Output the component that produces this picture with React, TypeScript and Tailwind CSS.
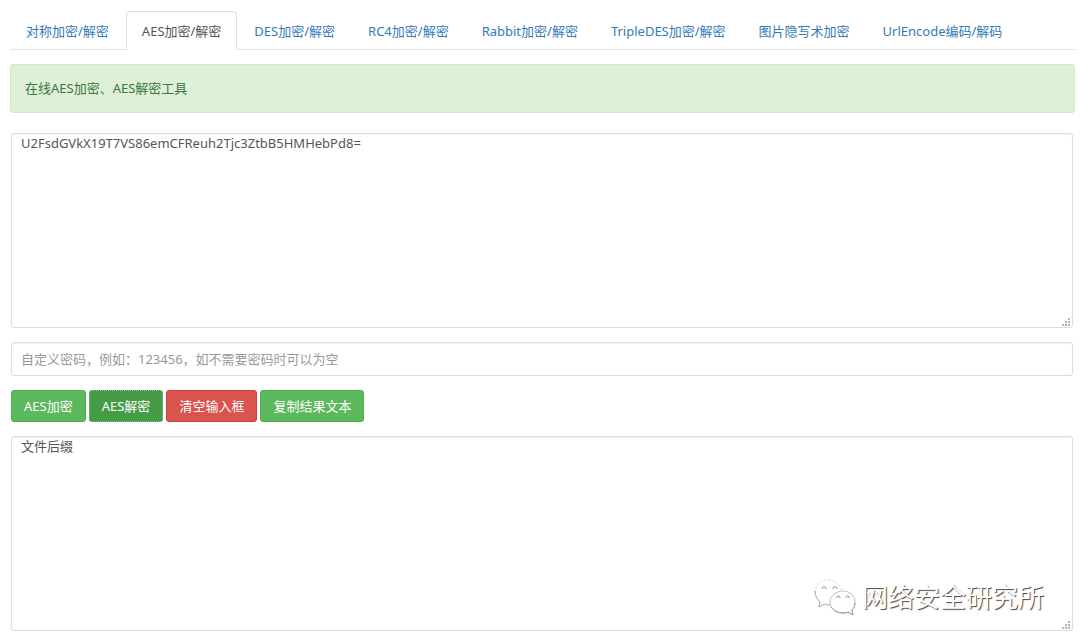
import React from "react";

const tabs = [
  "对称加密/解密",
  "AES加密/解密",
  "DES加密/解密",
  "RC4加密/解密",
  "Rabbit加密/解密",
  "TripleDES加密/解密",
  "图片隐写术加密",
  "UrlEncode编码/解码",
];

function Grip() {
  return (
    <svg
      className="pointer-events-none absolute right-[3px] bottom-[2px] h-2 w-2 fill-[#b5b5b5]"
      viewBox="0 0 8 8"
      aria-hidden="true"
    >
      <path d="M0 6h2v2H0zM3 6h2v2H3zM6 6h2v2H6zM3 3h2v2H3zM6 3h2v2H6zM6 0h2v2H6z" />
    </svg>
  );
}

function TextPanel({ label, value }: { label: string; value: string }) {
  return (
    <div className="relative">
      <textarea
        aria-label={label}
        defaultValue={value}
        rows={10}
        spellCheck={false}
        className="block h-[195px] w-full resize-none rounded-[3px] border border-[#dcdcdc] bg-white px-[9px] text-[13px] leading-[18px] text-[#555] shadow-[inset_0_1px_1px_rgba(0,0,0,0.06)] outline-none"
      />
      <Grip />
    </div>
  );
}

function Watermark() {
  return (
    <div className="pointer-events-none absolute right-9 bottom-[29px] flex items-center gap-[6px]">
      <svg className="h-9 w-[42px]" viewBox="0 0 42 36" fill="none" aria-hidden="true">
        <path
          d="M28 11C26 5 21 1 15 1C7 1 1 6 1 13"
          stroke="#d5d5d5"
          strokeDasharray="2 2"
        />
        <path d="M1 12c0 5 2 8 5 11l-1 5 6-3c2 1 4 1 6 1" stroke="#a5a5a5" />
        <path
          d="M29 12c-7 0-13 5-13 11s6 11 13 11c2 0 4 0 5-1l5 3-1-5c2-2 3-4 3-8 0-6-5-11-12-11z"
          fill="#fff"
          stroke="#c0c0c0"
        />
        <path d="M17 28c3 4 7 6 12 6 2 0 4 0 5-1l5 3-1-5c2-2 3-4 3-7" stroke="#999" />
        <path
          d="M8 10c0-3 4-3 4 0M19 10c0-3 4-3 4 0M23 19c0-3 3-3 3 0M32 19c0-3 3-3 3 0"
          stroke="#888"
        />
      </svg>
      <span className="text-[26px] leading-9 whitespace-nowrap text-white [text-shadow:1px_1px_1px_#444]">
        网络安全研究所
      </span>
    </div>
  );
}

const buttonBase = "h-8 rounded-[3px] border px-3 text-[13px] leading-[18px] text-white";

export default function App() {
  return (
    <main className="relative min-h-screen bg-white pt-[11px] pr-[5px] pb-[13px] pl-[10px] font-['Noto_Sans','Noto_Sans_CJK_SC',sans-serif] text-[13px] leading-[18px]">
      <nav className="flex gap-px border-b border-[#e3e3e3]">
        {tabs.map((tab, i) => (
          <a
            key={tab}
            href="#"
            aria-current={i === 1 ? "page" : undefined}
            className={
              i === 1
                ? "-mb-px rounded-t-[4px] border border-[#ddd] border-b-white bg-white px-[15px] pt-[10px] pb-[9px] whitespace-nowrap text-[#555]"
                : "-mb-px border border-transparent px-[15px] pt-[10px] pb-[9px] whitespace-nowrap text-[#337ab7]"
            }
          >
            {tab}
          </a>
        ))}
      </nav>

      <div className="mt-[14px] rounded-[3px] border border-[#d6e9c6] bg-[#dff0d8] px-[14px] py-[15px] leading-[17px] text-[#3c763d]">
        在线AES加密、AES解密工具
      </div>

      <form className="mt-5 mr-[2px] ml-px" onSubmit={(e) => e.preventDefault()}>
        <TextPanel label="输入" value="U2FsdGVkX19T7VS86emCFReuh2Tjc3ZtbB5HMHebPd8=" />
        <input
          type="text"
          aria-label="密码"
          placeholder="自定义密码，例如：123456，如不需要密码时可以为空"
          className="mt-[14px] block h-[34px] w-full rounded-[3px] border border-[#dcdcdc] bg-white px-[9px] text-[13px] leading-[18px] text-[#555] shadow-[inset_0_1px_1px_rgba(0,0,0,0.06)] outline-none placeholder:text-[#999]"
        />
        <div className="my-[14px] flex gap-[3px]">
          <button type="button" className={`${buttonBase} border-[#4cae4c] bg-[#5cb85c]`}>
            AES加密
          </button>
          <button
            type="button"
            className={`${buttonBase} border-[#398439] bg-[#449d44] outline-1 -outline-offset-1 outline-[#a5cfa5] outline-dotted`}
          >
            AES解密
          </button>
          <button type="button" className={`${buttonBase} border-[#d43f3a] bg-[#d9534f]`}>
            清空输入框
          </button>
          <button type="button" className={`${buttonBase} border-[#4cae4c] bg-[#5cb85c]`}>
            复制结果文本
          </button>
        </div>
        <TextPanel label="结果" value="文件后缀" />
      </form>
      <Watermark />
    </main>
  );
}
